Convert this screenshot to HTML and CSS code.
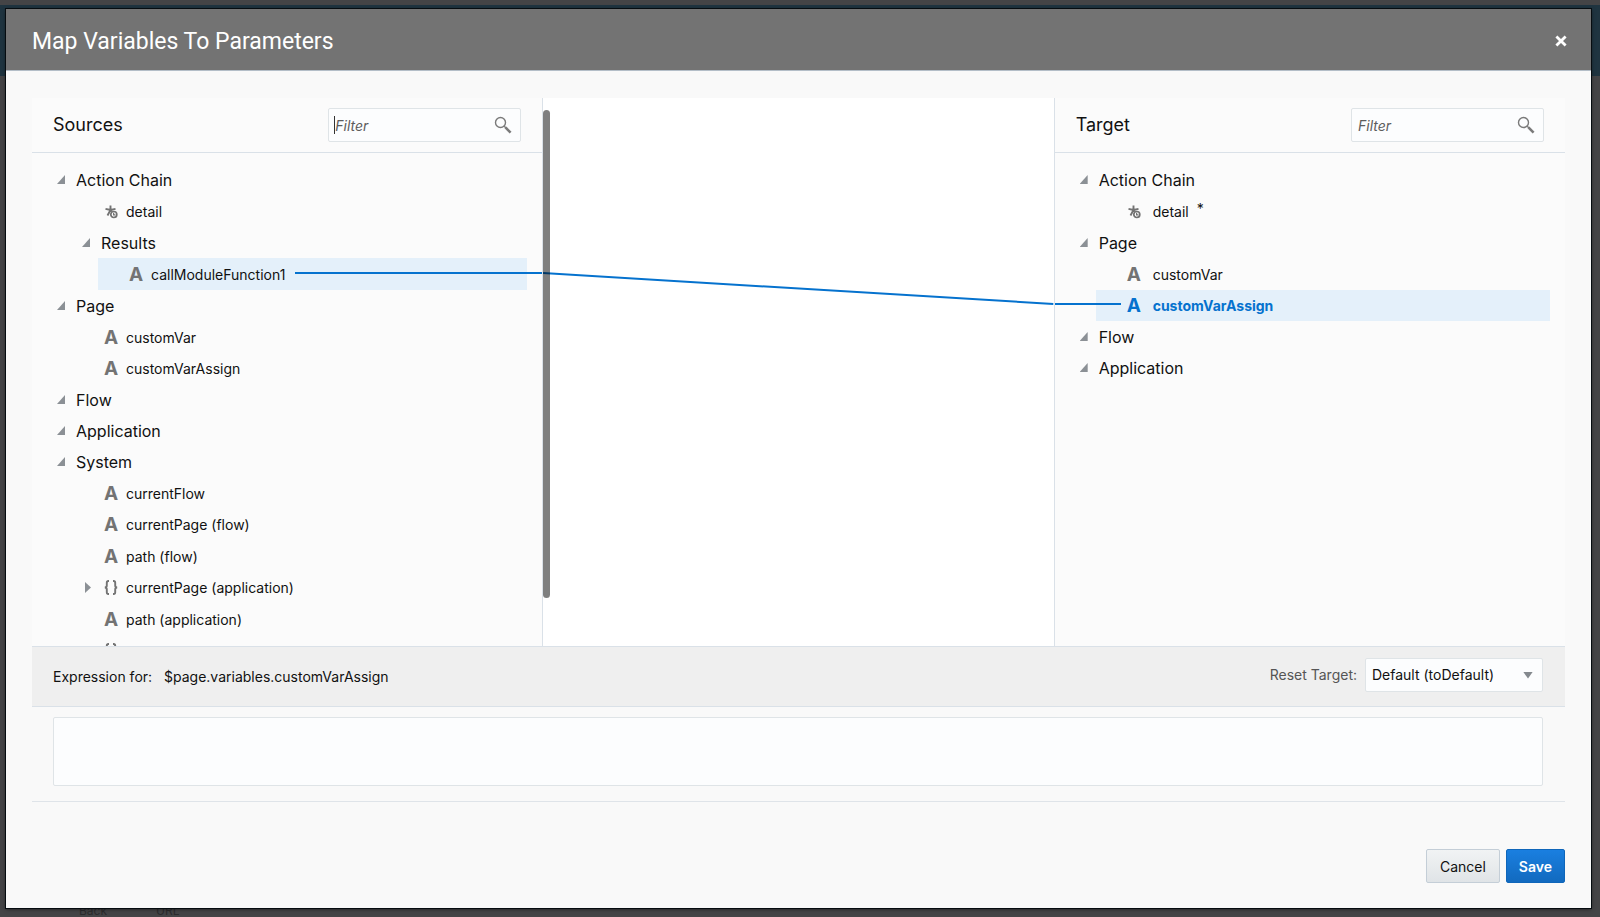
FILE: index.html
```html
<!DOCTYPE html>
<html lang="en">
<head>
    <meta charset="UTF-8">
    <meta name="viewport" content="width=device-width, initial-scale=1.0">
    <title>Map Variables To Parameters</title>
    <link rel="stylesheet" href="styles.css">
</head>
<body>
    <!-- Shared icons -->
    <svg class="defs" width="0" height="0" aria-hidden="true">
        <symbol id="icon-object" viewBox="0 0 14 15">
            <path d="M5 1 H4.4 Q2.8 1 2.8 2.8 V5.6 Q2.8 7.5 0.8 7.5 Q2.8 7.5 2.8 9.4 V12.2 Q2.8 14 4.4 14 H5 M9 1 H9.6 Q11.2 1 11.2 2.8 V5.6 Q11.2 7.5 13.2 7.5 Q11.2 7.5 11.2 9.4 V12.2 Q11.2 14 9.6 14 H9" fill="none" stroke="currentColor" stroke-width="1.9"/>
        </symbol>
        <symbol id="icon-any" viewBox="0 0 14 15">
            <path d="M6.5 1.5 V6.5 M1.5 4.8 L6.5 6 L11.5 4.8 M6.5 6 L3.5 11.5 M6.5 6 L8 7.5" fill="none" stroke="currentColor" stroke-width="1.9"/>
            <circle cx="9.8" cy="10.5" r="3" fill="none" stroke="currentColor" stroke-width="1.7"/>
            <path d="M9.6 8.8 V10.8 H11.4" fill="none" stroke="currentColor" stroke-width="1.2"/>
        </symbol>
        <symbol id="icon-search" viewBox="0 0 18 18">
            <circle cx="6.5" cy="6.5" r="5" fill="none" stroke="currentColor" stroke-width="1.4"/>
            <path d="M10.2 10.2 L11.8 11.8" stroke="currentColor" stroke-width="1.4"/>
            <path d="M11.4 11.4 L16.6 16.6" stroke="currentColor" stroke-width="2.6"/>
        </symbol>
    </svg>

    <div class="dialog" role="dialog" aria-labelledby="dialogTitle">
        <header class="dialog-header">
            <h1 id="dialogTitle">Map Variables To Parameters</h1>
            <button class="close" type="button" aria-label="Close">
                <svg width="12" height="12" viewBox="0 0 12 12"><path d="M1.4 1.4 L10.6 10.6 M10.6 1.4 L1.4 10.6" stroke="#fff" stroke-width="2.8"/></svg>
            </button>
        </header>

        <main class="dialog-body">
            <div class="mapper">
                <section class="panel sources">
                    <div class="panel-header">
                        <h2>Sources</h2>
                        <div class="filter">
                            <input type="text" placeholder="Filter" aria-label="Filter sources">
                            <span class="caret"></span>
                            <svg class="search"><use href="#icon-search"/></svg>
                        </div>
                    </div>
                    <ul class="tree">
                        <li><div class="group"><span class="arrow open"></span>Action Chain</div>
                            <ul>
                                <li class="leaf"><svg class="icon"><use href="#icon-any"/></svg>detail</li>
                                <li><div class="group"><span class="arrow open"></span>Results</div>
                                    <ul>
                                        <li class="leaf selected"><span class="icon string">A</span>callModuleFunction1<span class="wire"></span></li>
                                    </ul>
                                </li>
                            </ul>
                        </li>
                        <li><div class="group"><span class="arrow open"></span>Page</div>
                            <ul>
                                <li class="leaf"><span class="icon string">A</span>customVar</li>
                                <li class="leaf"><span class="icon string">A</span>customVarAssign</li>
                            </ul>
                        </li>
                        <li><div class="group"><span class="arrow open"></span>Flow</div></li>
                        <li><div class="group"><span class="arrow open"></span>Application</div></li>
                        <li><div class="group"><span class="arrow open"></span>System</div>
                            <ul>
                                <li class="leaf"><span class="icon string">A</span>currentFlow</li>
                                <li class="leaf"><span class="icon string">A</span>currentPage (flow)</li>
                                <li class="leaf"><span class="icon string">A</span>path (flow)</li>
                                <li class="leaf expandable"><span class="arrow"></span><svg class="icon"><use href="#icon-object"/></svg>currentPage (application)</li>
                                <li class="leaf"><span class="icon string">A</span>path (application)</li>
                                <li class="leaf"><svg class="icon"><use href="#icon-object"/></svg></li>
                            </ul>
                        </li>
                    </ul>
                </section>

                <section class="canvas">
                    <svg class="link" viewBox="0 0 512 240" preserveAspectRatio="none">
                        <path d="M0 175 L512 206" fill="none" stroke="#0572ce" stroke-width="2" vector-effect="non-scaling-stroke"/>
                    </svg>
                    <div class="scrollbar"></div>
                </section>

                <section class="panel target">
                    <div class="panel-header">
                        <h2>Target</h2>
                        <div class="filter">
                            <input type="text" placeholder="Filter" aria-label="Filter target">
                            <svg class="search"><use href="#icon-search"/></svg>
                        </div>
                    </div>
                    <ul class="tree">
                        <li><div class="group"><span class="arrow open"></span>Action Chain</div>
                            <ul>
                                <li class="leaf"><svg class="icon"><use href="#icon-any"/></svg>detail<span class="required">*</span></li>
                            </ul>
                        </li>
                        <li><div class="group"><span class="arrow open"></span>Page</div>
                            <ul>
                                <li class="leaf"><span class="icon string">A</span>customVar</li>
                                <li class="leaf selected mapped"><span class="icon string">A</span>customVarAssign</li>
                            </ul>
                        </li>
                        <li><div class="group"><span class="arrow open"></span>Flow</div></li>
                        <li><div class="group"><span class="arrow open"></span>Application</div></li>
                    </ul>
                </section>
            </div>

            <div class="expression-bar">
                <label for="expression">Expression for: <span class="path">$page.variables.customVarAssign</span></label>
                <div class="reset">
                    <label for="resetTarget">Reset Target:</label>
                    <div class="select">
                        <select id="resetTarget">
                            <option>Default (toDefault)</option>
                        </select>
                    </div>
                </div>
            </div>
            <div class="expression">
                <textarea id="expression"></textarea>
            </div>
        </main>

        <footer class="dialog-footer">
            <button class="btn" type="button">Cancel</button>
            <button class="btn primary" type="button">Save</button>
        </footer>
    </div>

    <!-- Dimmed page behind the dialog -->
    <div class="page-behind" aria-hidden="true">
        <span>Back</span>
        <span>URL</span>
    </div>
</body>
</html>
```

FILE: styles.css
```css
* {
    box-sizing: border-box;
}

body {
    display: flex;
    flex-direction: column;
    height: 100vh;
    margin: 0;
    padding: 9px 9px 0 6px;
    overflow: hidden;
    font-family: Inter, "Liberation Sans", sans-serif;
    font-size: 14px;
    color: #111;
    background: linear-gradient(#444446 5px, #1f3440 5px, #1f3440 76px, #444446 76px);
}

h1, h2, ul {
    margin: 0;
    padding: 0;
}

ul {
    list-style: none;
}

button, input, select, textarea {
    font: inherit;
    color: inherit;
}

.defs {
    position: absolute;
}

/* Dialog */
.dialog {
    position: relative;
    z-index: 1;
    flex: 1;
    min-height: 0;
    display: flex;
    flex-direction: column;
    background: #f9f9f9;
    box-shadow: 0 0 0 1px #060c10, 0 1px 4px rgba(0, 0, 0, 0.6);
}

.dialog-header {
    display: flex;
    align-items: center;
    justify-content: space-between;
    height: 62px;
    padding: 3px 22px 0 26px;
    background: #737373;
    border-bottom: 1px solid #b4bec8;
}

.dialog-header h1 {
    font-family: Roboto, Inter, sans-serif;
    font-size: 23px;
    font-weight: 400;
    color: #fff;
}

.close {
    display: flex;
    padding: 2px;
    background: none;
    border: 0;
}

.dialog-body {
    flex: 1;
    min-height: 0;
    display: flex;
    flex-direction: column;
    margin: 27px 26px 0;
    border-bottom: 1px solid #dfe4e9;
}

/* Mapper */
.mapper {
    flex: 1;
    min-height: 0;
    display: flex;
}

.panel, .canvas {
    flex: 1;
    min-width: 0;
    overflow: hidden;
}

.panel {
    background: #fbfbfb;
}

.panel-header {
    display: flex;
    align-items: center;
    justify-content: space-between;
    height: 55px;
    padding: 0 21px;
    border-bottom: 1px solid #dae1e8;
}

.sources {
    border-right: 1px solid #dae1e8;
}

.target {
    border-left: 1px solid #dae1e8;
}

.panel-header h2 {
    padding-bottom: 2px;
    font-size: 18px;
    font-weight: 400;
}

.filter {
    position: relative;
    width: 193px;
}

.filter input {
    display: block;
    width: 100%;
    height: 34px;
    padding: 0 36px 0 6px;
    border: 1px solid #dfe4e7;
    border-radius: 2px;
    background: #fcfdfe;
}

.filter input::placeholder {
    font-style: italic;
    color: #5c5c5c;
    opacity: 1;
}

.caret {
    position: absolute;
    top: 8px;
    left: 6px;
    width: 1px;
    height: 18px;
    background: #333;
}

.search {
    position: absolute;
    top: 8px;
    right: 9px;
    width: 18px;
    height: 18px;
    color: #7a7a7a;
}

/* Tree */
.tree {
    padding: 11px 15px 0 16px;
}

.tree ul {
    padding-left: 25px;
}

.group {
    display: flex;
    align-items: center;
    height: 31px;
    padding-left: 9px;
    font-size: 16px;
}

.arrow {
    width: 19px;
}

.arrow::before {
    content: "";
    display: block;
    width: 6px;
    height: 11px;
    background: #8b9095;
    clip-path: polygon(0 0, 100% 50%, 0 100%);
}

.arrow.open::before {
    width: 8px;
    height: 9px;
    clip-path: polygon(100% 0, 100% 100%, 0 100%);
}

.leaf {
    position: relative;
    display: flex;
    align-items: center;
    height: 32px;
    padding-left: 31px;
}

.leaf:nth-child(even) {
    height: 31px;
}

.expandable {
    padding-left: 12px;
}

.icon {
    width: 14px;
    height: 15px;
    margin-right: 8px;
    color: #737373;
}

.string {
    font-size: 19px;
    font-weight: 700;
    line-height: 15px;
}

.target .icon {
    margin-right: 12px;
}

.required {
    padding: 0 0 6px 8px;
}

.selected {
    background: #e4f0fa;
}

.mapped, .mapped .icon {
    font-weight: 700;
    color: #0572ce;
}

/* Link between the two selected rows */
.wire {
    flex: 1;
    height: 2px;
    margin: 0 -16px 2px 10px;
    background: #0572ce;
}

.mapped::before {
    content: "";
    position: absolute;
    top: 13px;
    left: -41px;
    width: 66px;
    height: 2px;
    background: #0572ce;
}

.canvas {
    position: relative;
    background: #fff;
}

.link {
    display: block;
    width: 100%;
    height: 240px;
}

.scrollbar {
    position: absolute;
    top: 12px;
    bottom: 48px;
    left: 0;
    width: 7px;
    border-radius: 4px;
    background: rgba(0, 0, 0, 0.5);
}

/* Expression */
.expression-bar {
    display: flex;
    align-items: center;
    justify-content: space-between;
    height: 61px;
    padding: 0 22px 0 21px;
    background: #efefef;
    border-top: 1px solid #dae1e8;
    border-bottom: 1px solid #dae1e8;
}

.path {
    margin-left: 8px;
}

.reset {
    display: flex;
    align-items: center;
    gap: 8px;
    padding-bottom: 4px;
    color: #555;
}

.select {
    position: relative;
    color: #111;
}

.select::after {
    content: "";
    position: absolute;
    top: 14px;
    right: 10px;
    width: 10px;
    height: 7px;
    background: #84898e;
    clip-path: polygon(0 0, 100% 0, 50% 100%);
    pointer-events: none;
}

.select select {
    display: block;
    width: 178px;
    height: 34px;
    padding: 0 6px;
    border: 1px solid #dfe4e7;
    border-radius: 2px;
    background: #fcfdfe;
    appearance: none;
}

.expression {
    padding: 10px 22px 15px 21px;
}

.expression textarea {
    display: block;
    width: 100%;
    height: 69px;
    border: 1px solid #dfe4e7;
    border-radius: 2px;
    background: #fcfdfe;
    resize: none;
}

/* Footer */
.dialog-footer {
    display: flex;
    justify-content: flex-end;
    gap: 6px;
    padding: 47px 26px 25px;
}

.btn {
    height: 34px;
    padding: 0 13px;
    border: 1px solid #c4ced7;
    border-radius: 2px;
    background: linear-gradient(#f1f3f4, #e0e4e7);
}

.btn.primary {
    padding: 0 12px;
    font-weight: 600;
    color: #fff;
    border-color: #0f66ba;
    background: linear-gradient(#1a7fe0, #126abf);
}

.page-behind {
    display: flex;
    gap: 49px;
    height: 9px;
    padding-left: 73px;
    font-size: 12px;
    line-height: 5px;
    color: #2c2c2e;
}
```
